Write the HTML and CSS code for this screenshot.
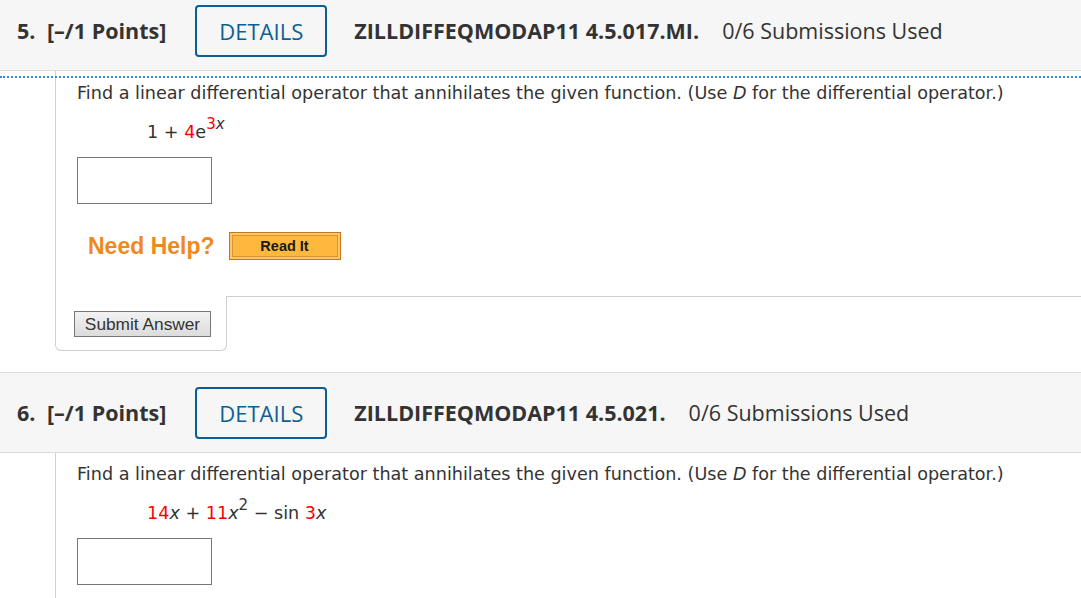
FILE: index.html
```html
<!DOCTYPE html>
<html lang="en">
<head>
    <meta charset="UTF-8">
    <title>Assignment</title>
    <link rel="stylesheet" href="styles.css">
</head>
<body>
    <div class="page">
        <div class="question">
            <div class="q-header">
                <span class="q-num">5.</span>
                <span class="q-points">[&ndash;/1 Points]</span>
                <button class="details-btn">DETAILS</button>
                <span class="q-code">ZILLDIFFEQMODAP11 4.5.017.MI.</span>
                <span class="q-subs">0/6 Submissions Used</span>
            </div>
            <div class="q-body focused">
                <p class="q-text">Find a linear differential operator that annihilates the given function. (Use <i>D</i> for the differential operator.)</p>
                <p class="q-math">1 + <span class="red">4</span>e<sup><span class="red">3</span><i>x</i></sup></p>
                <input type="text" class="answer">
                <div class="help">
                    <span class="need-help">Need Help?</span>
                    <button class="read-btn">Read It</button>
                </div>
            </div>
            <div class="q-footer">
                <div class="submit-box">
                    <button class="submit-btn">Submit Answer</button>
                </div>
                <div class="footer-rest"></div>
            </div>
        </div>

        <div class="question">
            <div class="q-header bordered">
                <span class="q-num">6.</span>
                <span class="q-points">[&ndash;/1 Points]</span>
                <button class="details-btn">DETAILS</button>
                <span class="q-code">ZILLDIFFEQMODAP11 4.5.021.</span>
                <span class="q-subs">0/6 Submissions Used</span>
            </div>
            <div class="q-body last">
                <p class="q-text">Find a linear differential operator that annihilates the given function. (Use <i>D</i> for the differential operator.)</p>
                <p class="q-math"><span class="red">14</span><i>x</i> + <span class="red">11</span><i>x</i><sup>2</sup> &minus; sin <span class="red">3</span><i>x</i></p>
                <input type="text" class="answer">
            </div>
        </div>
    </div>
</body>
</html>
```

FILE: styles.css
```css
body {
    margin: 0;
    background-color: #fff;
    font-family: "Open Sans", sans-serif;
    color: #333;
    overflow: hidden;
}

.page {
    margin-top: -9px;
}

.q-header {
    display: flex;
    align-items: center;
    height: 79px;
    padding-left: 17px;
    background-color: #f6f6f6;
    border-bottom: 1px solid #dcdcdc;
    font-size: 21.5px;
}

.q-header.bordered {
    border-top: 1px solid #dcdcdc;
    margin-top: 21px;
}

.q-num {
    font-weight: 700;
    width: 30px;
}

.q-points {
    font-weight: 700;
}

.details-btn {
    font-family: "Open Sans", sans-serif;
    font-size: 22px;
    color: #0b5f93;
    background-color: transparent;
    border: 2px solid #0b5f93;
    border-radius: 4px;
    width: 132px;
    height: 52px;
    margin-left: 29px;
    margin-right: 27px;
    padding: 0;
}

.q-code {
    font-weight: 700;
    margin-right: 23px;
}

.q-body {
    position: relative;
    margin-left: 55px;
    border-left: 1px solid #cfcfcf;
    padding: 9px 0 0 21px;
    font-family: "DejaVu Sans", Verdana, sans-serif;
    font-size: 17.6px;
    color: #333;
}

.q-body.focused {
    padding-top: 10px;
}

.q-body.last {
    padding-bottom: 30px;
}

/* focus outline across the question */
.q-body.focused::before {
    content: "";
    position: absolute;
    left: -56px;
    right: 0;
    top: 5px;
    border-top: 2px dotted #2b8ee0;
}

.q-text {
    margin: 0;
    line-height: 24px;
}

.q-math {
    margin: 15px 0 0 70px;
    line-height: 24px;
}

.q-math sup {
    font-size: 15px;
    line-height: 0;
    vertical-align: 0.6em;
}

.red {
    color: #f00;
}

.answer {
    display: block;
    width: 135px;
    height: 47px;
    box-sizing: border-box;
    margin: 13px 0 0 0;
    border: 1px solid #777;
    background-color: #fff;
}

.help {
    display: flex;
    align-items: center;
    margin: 28px 0 0 11px;
    padding-bottom: 36px;
}

.need-help {
    font-family: "Liberation Sans", Arial, sans-serif;
    font-weight: 700;
    font-size: 23px;
    color: #f0891c;
    margin-right: 14px;
}

.read-btn {
    width: 112px;
    height: 28px;
    background-color: #ffb83e;
    border: 1px solid #c4751f;
    box-shadow: inset 0 0 0 2px #ffc766, inset 0 0 0 3px #d99435;
    font-family: "Liberation Sans", Arial, sans-serif;
    font-weight: 700;
    font-size: 14.5px;
    color: #1a1a1a;
    padding: 0;
}

.q-footer {
    display: flex;
    margin-left: 55px;
}

.submit-box {
    width: 172px;
    height: 55px;
    border: 1px solid #cfcfcf;
    border-top: none;
    border-radius: 0 0 6px 6px;
    padding: 15px 0 0 18px;
    box-sizing: border-box;
}

.submit-btn {
    font-family: "Liberation Sans", Arial, sans-serif;
    font-size: 17.3px;
    color: #333;
    background: linear-gradient(#f2f2f2, #dcdcdc);
    border: 1px solid #777;
    width: 137px;
    height: 26px;
    padding: 0;
}

.footer-rest {
    flex: 1;
    border-top: 1px solid #cfcfcf;
}
```
